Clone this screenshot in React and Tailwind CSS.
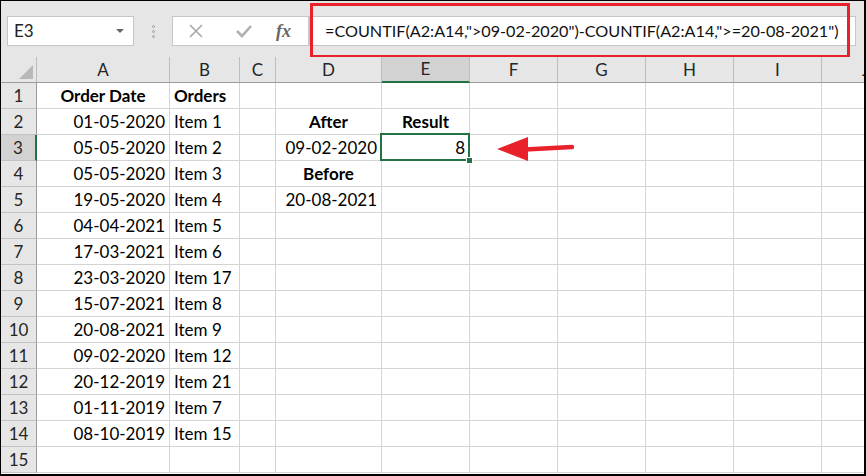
import React from "react";

const cols = [
  { key: "", w: "w-[36px]" },
  { key: "A", w: "w-[133px]" },
  { key: "B", w: "w-[70px]" },
  { key: "C", w: "w-[36px]" },
  { key: "D", w: "w-[106px]" },
  { key: "E", w: "w-[88px]" },
  { key: "F", w: "w-[88px]" },
  { key: "G", w: "w-[88px]" },
  { key: "H", w: "w-[88px]" },
  { key: "I", w: "w-[88px]" },
  { key: "J", w: "w-[88px]" },
];

// cell content: [text, align, bold]
const data = {
  1: { A: ["Order Date", "c", 1], B: ["Orders", "l", 1] },
  2: { A: ["01-05-2020"], B: ["Item 1", "l"], D: ["After", "c", 1], E: ["Result", "c", 1] },
  3: { A: ["05-05-2020"], B: ["Item 2", "l"], D: ["09-02-2020"], E: ["8"] },
  4: { A: ["05-05-2020"], B: ["Item 3", "l"], D: ["Before", "c", 1] },
  5: { A: ["19-05-2020"], B: ["Item 4", "l"], D: ["20-08-2021"] },
  6: { A: ["04-04-2021"], B: ["Item 5", "l"] },
  7: { A: ["17-03-2021"], B: ["Item 6", "l"] },
  8: { A: ["23-03-2020"], B: ["Item 17", "l"] },
  9: { A: ["15-07-2021"], B: ["Item 8", "l"] },
  10: { A: ["20-08-2021"], B: ["Item 9", "l"] },
  11: { A: ["09-02-2020"], B: ["Item 12", "l"] },
  12: { A: ["20-12-2019"], B: ["Item 21", "l"] },
  13: { A: ["01-11-2019"], B: ["Item 7", "l"] },
  14: { A: ["08-10-2019"], B: ["Item 15", "l"] },
  15: {},
};

const alignClass = {
  l: "justify-start pl-[4px]",
  c: "justify-center",
  r: "justify-end pr-[4px]",
};

function Toolbar() {
  return (
    <div className="relative h-[56px] bg-[#e6e6e6] flex items-start pt-[15px] pl-[6px]">
      {/* name box */}
      <div className="w-[127px] h-[30px] bg-white border border-[#c6c6c6] flex items-center justify-between pl-[6px] pr-[8px]">
        <span className="text-[17px] text-[#222]">E3</span>
        <svg width="10" height="6" viewBox="0 0 10 6">
          <path d="M1 1 L9 1 L5 5 Z" fill="#666" />
        </svg>
      </div>
      {/* dots */}
      <div className="w-[38px] h-[30px] flex flex-col items-center justify-center gap-[2px]">
        <span className="w-[3px] h-[3px] rounded-full border border-[#9a9a9a]" />
        <span className="w-[3px] h-[3px] rounded-full border border-[#9a9a9a]" />
        <span className="w-[3px] h-[3px] rounded-full border border-[#9a9a9a]" />
      </div>
      {/* formula buttons */}
      <div className="w-[137px] h-[30px] bg-white border border-[#c6c6c6] flex items-center pl-[14px]">
        <svg width="16" height="16" viewBox="0 0 16 16" className="ml-[1px]">
          <path d="M2 2 L14 14 M14 2 L2 14" stroke="#a8a8a8" strokeWidth="1.6" />
        </svg>
        <svg width="16" height="14" viewBox="0 0 16 14" className="ml-[32px]">
          <path d="M1 7 L6 12 L15 2" stroke="#b0b0b0" strokeWidth="2.6" fill="none" />
        </svg>
        <span className="ml-[24px] text-[18px] italic font-semibold text-[#666] font-['Liberation_Serif',serif] leading-none">
          fx
        </span>
      </div>
      {/* formula input */}
      <div className="flex-1 mr-[8px] h-[30px] bg-white border border-[#c6c6c6] flex items-center pl-[15px]">
        <span className="text-[16.2px] text-[#111] whitespace-nowrap">
          =COUNTIF(A2:A14,"&gt;09-02-2020")-COUNTIF(A2:A14,"&gt;=20-08-2021")
        </span>
      </div>
      {/* red highlight box */}
      <div className="absolute left-[309px] top-[2px] w-[540px] h-[55px] border-[3px] border-[#e8212b]" />
    </div>
  );
}

function HeaderRow() {
  return (
    <div className="flex h-[26px] border-b border-[#9b9b9b] bg-[#e6e6e6]">
      {cols.map((c, i) =>
        i === 0 ? (
          <div key="corner" className={`${c.w} shrink-0 relative border-r border-[#bdbdbd]`}>
            <svg width="14" height="14" viewBox="0 0 14 14" className="absolute right-[3px] bottom-[3px]">
              <path d="M14 0 L14 14 L0 14 Z" fill="#b8b8b8" />
            </svg>
          </div>
        ) : (
          <div
            key={c.key}
            className={`${c.w} shrink-0 flex items-center justify-center text-[17px] text-[#262626] border-r ${
              c.key === "E"
                ? "bg-[#d2d2d2] border-[#bdbdbd] border-b-2 border-b-[#217346] -mb-[1px]"
                : "border-[#bdbdbd]"
            }`}
          >
            {c.key}
          </div>
        )
      )}
    </div>
  );
}

function Row({ n }) {
  const row = data[n] || {};
  return (
    <div className="flex h-[26px]">
      <div
        className={`${cols[0].w} shrink-0 flex items-center justify-center text-[17px] text-[#262626] border-b border-[#c2c2c2] ${
          n === 3
            ? "bg-[#d2d2d2] border-r-2 border-r-[#217346]"
            : "bg-[#e6e6e6] border-r border-r-[#9b9b9b]"
        }`}
      >
        {n}
      </div>
      {cols.slice(1).map((c) => {
        const cell = row[c.key];
        const selected = n === 3 && c.key === "E";
        return (
          <div
            key={c.key}
            className={`${c.w} shrink-0 relative flex items-center border-r border-b border-[#d4d4d4] text-[17px] text-black whitespace-nowrap ${
              alignClass[(cell && cell[1]) || "r"]
            } ${cell && cell[2] ? "font-bold" : ""} ${selected ? "z-10" : ""}`}
          >
            {cell ? cell[0] : null}
            {selected && (
              <>
                <div className="absolute -left-[2px] -top-[2px] -right-[1px] -bottom-[1px] border-2 border-[#217346]" />
                <div className="absolute -right-[4px] -bottom-[4px] w-[7px] h-[7px] bg-[#217346] border border-white" />
              </>
            )}
          </div>
        );
      })}
    </div>
  );
}

export default function App() {
  const rows = Array.from({ length: 15 }, (_, i) => i + 1);
  return (
    <div className="w-[866px] h-[476px] overflow-hidden bg-white border-t border-l border-r-2 border-b-2 border-black font-['Lato',sans-serif]">
      <Toolbar />
      <div className="relative">
        <HeaderRow />
        {rows.map((n) => (
          <Row key={n} n={n} />
        ))}
        {/* red arrow pointing at the result */}
        <svg
          width="82"
          height="30"
          viewBox="0 0 82 30"
          className="absolute left-[494px] top-[77px] z-20"
        >
          <path d="M2 15 L33 3 L33 27 Z" fill="#e8212b" />
          <path d="M30 15.5 L77 13" stroke="#e8212b" strokeWidth="4.5" strokeLinecap="round" />
        </svg>
      </div>
    </div>
  );
}
